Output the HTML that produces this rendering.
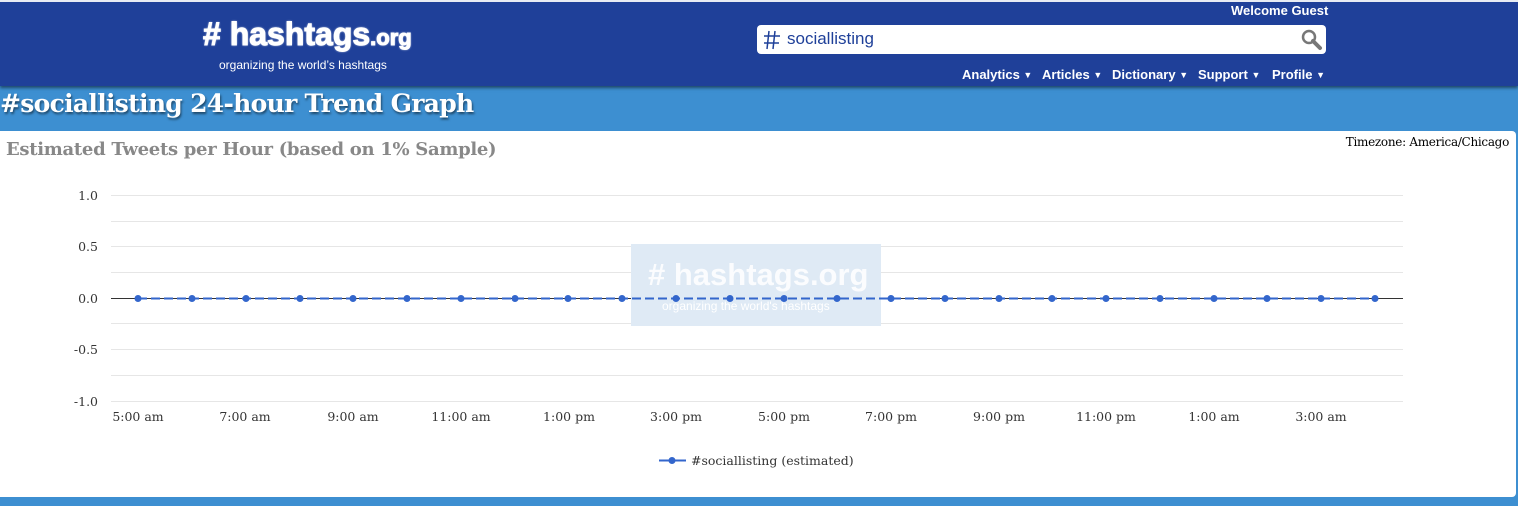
<!DOCTYPE html>
<html><head><meta charset="utf-8"><style>
body{margin:0;width:1518px;height:506px;overflow:hidden;background:#3d8fd1;font-family:"Liberation Sans",sans-serif;position:relative}
.hdr{position:absolute;left:0;top:0;width:1518px;height:86px;background:#1f4099;border-top:2px solid #e8ecf4;box-sizing:border-box;box-shadow:0 2px 3px rgba(0,0,0,.5)}
.logo{position:absolute;left:203px;top:14px;color:#fff;font-weight:bold;font-size:32px;letter-spacing:0px;-webkit-text-stroke:1px #fff;text-shadow:0 0 2px #fff}
.logo small{font-size:22px}
.tag{position:absolute;left:219px;top:56px;color:#fff;font-size:12px}
.wel{position:absolute;left:1231px;top:1px;color:#fff;font-size:13px;font-weight:bold}
.search{position:absolute;left:757px;top:23px;width:569px;height:29px;background:#fff;border-radius:4px}
.search span{position:absolute;left:30px;top:4px;font-size:17px;color:#1f4099}
.nav{position:absolute;top:65px;color:#fff;font-size:13px;font-weight:bold}
.nav i{font-style:normal;font-size:9px;vertical-align:1px}
.ttl{position:absolute;left:0;top:89px;color:#fff;font-family:"DejaVu Serif",serif;font-weight:bold;font-size:25px;letter-spacing:-0.7px;text-shadow:1px 2px 2px rgba(0,0,0,.5)}
.panel{position:absolute;left:0;top:131px;width:1516px;height:366px;background:#fff;border-radius:0 4px 4px 0}
.sub{position:absolute;left:6px;top:8px;color:#888;font-family:"DejaVu Serif",serif;font-weight:bold;font-size:18px;letter-spacing:-0.3px}
.tz{position:absolute;right:7px;top:4px;font-family:"DejaVu Serif",serif;font-size:12px;color:#000;letter-spacing:-0.3px}
</style></head><body>
<div class="hdr">
<div class="logo"># hashtags<small>.org</small></div>
<div class="tag">organizing the world’s hashtags</div>
<div class="wel">Welcome Guest</div>
<div class="search"><svg style="position:absolute;left:6px;top:5px" width="18" height="20"><g stroke="#1f4099" stroke-width="1.5" fill="none"><path d="M6 1L4 19M12 1L10 19M1 6H17M1 13H16"/></g></svg><span>sociallisting</span>
<svg style="position:absolute;left:544px;top:4px" width="22" height="22"><circle cx="8" cy="8" r="6" stroke="#777" stroke-width="2.5" fill="none"/><path d="M12 12L19 19" stroke="#777" stroke-width="4" stroke-linecap="round"/></svg></div>
<div class="nav" style="left:962px">Analytics <i>▼</i></div>
<div class="nav" style="left:1042px">Articles <i>▼</i></div>
<div class="nav" style="left:1112px">Dictionary <i>▼</i></div>
<div class="nav" style="left:1198px">Support <i>▼</i></div>
<div class="nav" style="left:1272px">Profile <i>▼</i></div>
</div>
<div class="ttl">#sociallisting 24-hour Trend Graph</div>
<div class="panel">
<div class="sub">Estimated Tweets per Hour (based on 1% Sample)</div>
<div class="tz">Timezone: America/Chicago</div>
</div>
<svg style="position:absolute;left:0;top:0" width="1518" height="506" font-family="DejaVu Serif, serif" font-size="12.5">
<g stroke="#e6e6e6" stroke-width="1">
<path d="M111 195.5H1403M111 221.5H1403M111 246.5H1403M111 272.5H1403M111 323.5H1403M111 349.5H1403M111 375.5H1403M111 401.5H1403"/>
</g>
<path d="M111 298.5H1403" stroke="#333"/>
<g fill="#333" text-anchor="end">
<text x="98" y="200">1.0</text><text x="98" y="251">0.5</text><text x="98" y="303">0.0</text><text x="98" y="354">-0.5</text><text x="98" y="406">-1.0</text>
</g>
<rect x="631" y="244" width="250" height="82" fill="#dfeaf5"/>
<text x="648" y="285" font-family="Liberation Sans" font-weight="bold" font-size="31" fill="#fff" opacity=".9"># hashtags.org</text>
<text x="662" y="310" font-family="Liberation Sans" font-size="12" fill="#fff">organizing the world's hashtags</text>
<path d="M138 298.5H1375" stroke="#3366cc" stroke-width="2" stroke-dasharray="9,4"/>
<g fill="#3366cc">
<circle cx="138" cy="298.5" r="3.5"/><circle cx="192" cy="298.5" r="3.5"/><circle cx="246" cy="298.5" r="3.5"/><circle cx="300" cy="298.5" r="3.5"/><circle cx="353" cy="298.5" r="3.5"/><circle cx="407" cy="298.5" r="3.5"/><circle cx="461" cy="298.5" r="3.5"/><circle cx="515" cy="298.5" r="3.5"/><circle cx="568" cy="298.5" r="3.5"/><circle cx="622" cy="298.5" r="3.5"/><circle cx="676" cy="298.5" r="3.5"/><circle cx="730" cy="298.5" r="3.5"/><circle cx="784" cy="298.5" r="3.5"/><circle cx="837" cy="298.5" r="3.5"/><circle cx="891" cy="298.5" r="3.5"/><circle cx="945" cy="298.5" r="3.5"/><circle cx="999" cy="298.5" r="3.5"/><circle cx="1052" cy="298.5" r="3.5"/><circle cx="1106" cy="298.5" r="3.5"/><circle cx="1160" cy="298.5" r="3.5"/><circle cx="1214" cy="298.5" r="3.5"/><circle cx="1267" cy="298.5" r="3.5"/><circle cx="1321" cy="298.5" r="3.5"/><circle cx="1375" cy="298.5" r="3.5"/>
</g>
<g fill="#333" text-anchor="middle">
<text x="138" y="421">5:00 am</text><text x="245" y="421">7:00 am</text><text x="353" y="421">9:00 am</text><text x="461" y="421">11:00 am</text><text x="569" y="421">1:00 pm</text><text x="676" y="421">3:00 pm</text><text x="784" y="421">5:00 pm</text><text x="891" y="421">7:00 pm</text><text x="999" y="421">9:00 pm</text><text x="1106" y="421">11:00 pm</text><text x="1214" y="421">1:00 am</text><text x="1321" y="421">3:00 am</text>
</g>
<path d="M659 460.5H686" stroke="#3366cc" stroke-width="2"/><circle cx="672" cy="460.5" r="3.5" fill="#3366cc"/>
<text x="691" y="465" fill="#333">#sociallisting (estimated)</text>
</svg>
</body></html>
